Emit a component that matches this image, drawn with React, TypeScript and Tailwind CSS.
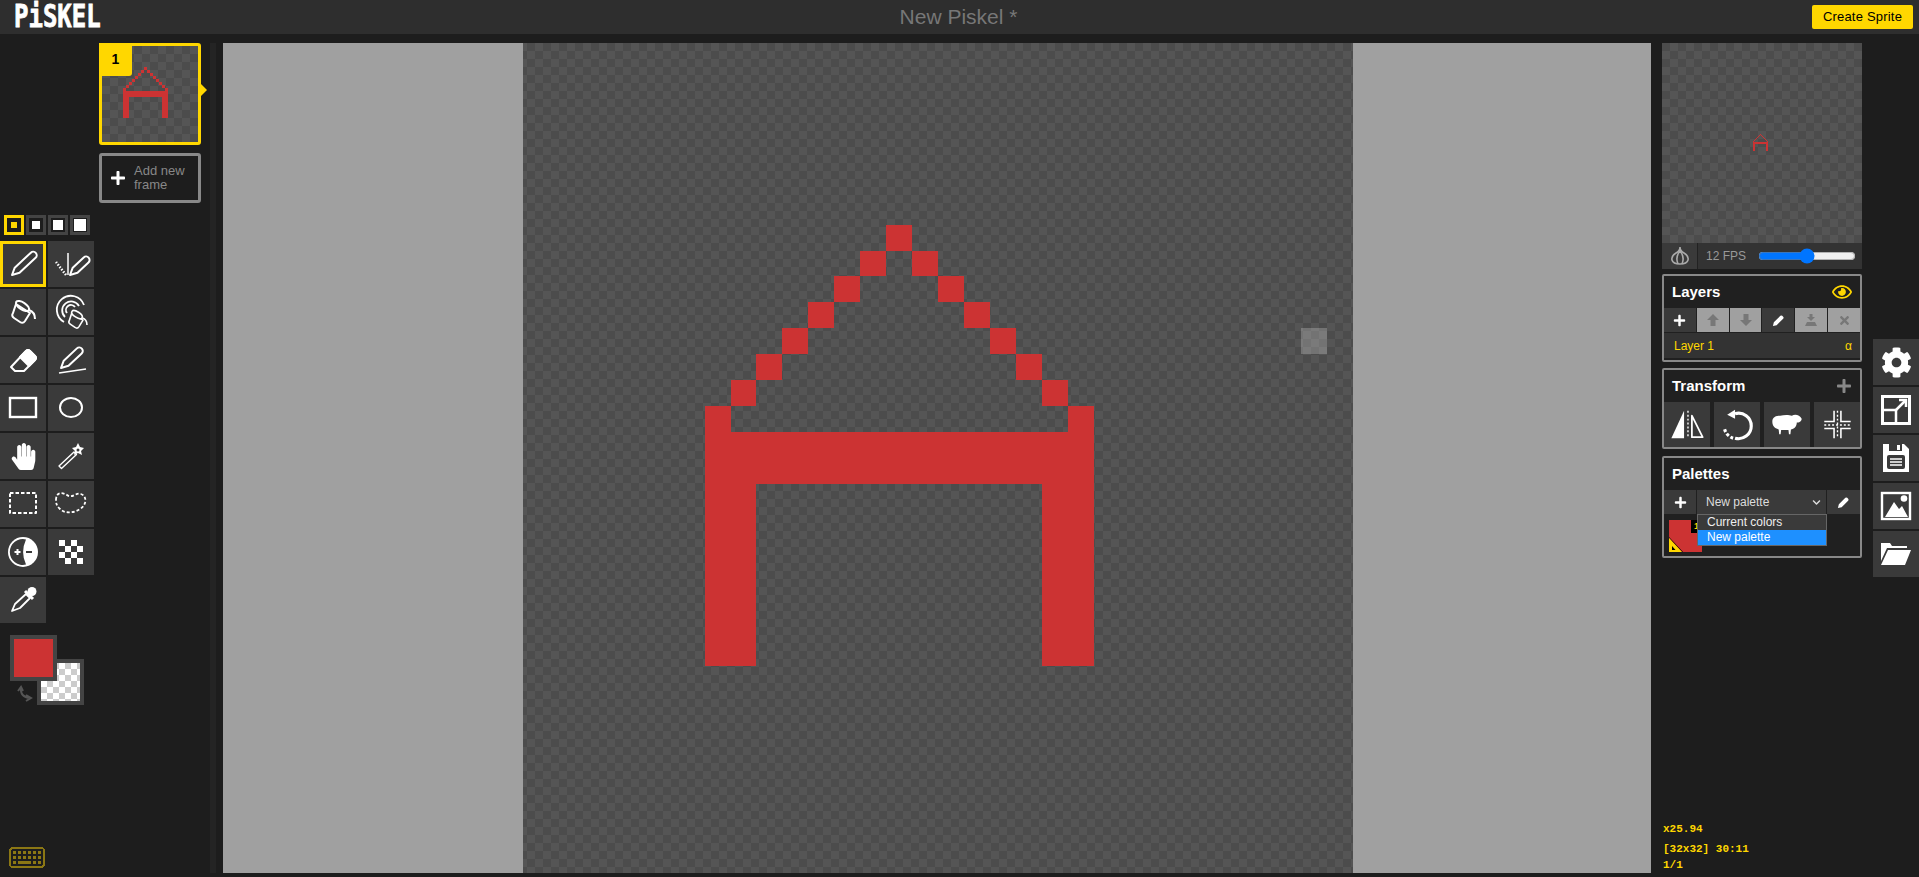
import type { ReactNode } from "react";
import { FaChevronDown, FaCog, FaHandPaper, FaPlus, FaRegEye, FaTimes } from "react-icons/fa";

const CHECKER =
  "bg-[conic-gradient(#555555_25%,#4c4c4c_0_50%,#555555_0_75%,#4c4c4c_0)] bg-[length:16px_16px]";

// sprite pixels as [col, row, w, h] on the 32x32 grid
const PIXELS = [
  [14, 7, 1, 1],
  [13, 8, 1, 1],
  [15, 8, 1, 1],
  [12, 9, 1, 1],
  [16, 9, 1, 1],
  [11, 10, 1, 1],
  [17, 10, 1, 1],
  [10, 11, 1, 1],
  [18, 11, 1, 1],
  [9, 12, 1, 1],
  [19, 12, 1, 1],
  [8, 13, 1, 1],
  [20, 13, 1, 1],
  [7, 14, 1, 1],
  [21, 14, 1, 1],
  [7, 15, 15, 2],
  [7, 17, 2, 7],
  [20, 17, 2, 7],
];

function Sprite({ className, hover }: { className: string; hover?: boolean }) {
  return (
    <svg viewBox="0 0 32 32" shapeRendering="crispEdges" className={className}>
      {PIXELS.map(([x, y, w, h]) => (
        <rect key={`${x}-${y}`} x={x} y={y} width={w} height={h} fill="#cc3333" />
      ))}
      {hover && <rect x={30} y={11} width={1} height={1} fill="#fff" fillOpacity={0.22} />}
    </svg>
  );
}

function Ico({ children }: { children: ReactNode }) {
  return (
    <svg
      viewBox="0 0 46 46"
      fill="none"
      stroke="#fff"
      strokeWidth={2}
      strokeLinejoin="round"
      className="h-full w-full"
    >
      {children}
    </svg>
  );
}

function Tile({
  children,
  selected,
  className = "h-[46px] w-[46px]",
}: {
  children: ReactNode;
  selected?: boolean;
  className?: string;
}) {
  return (
    <div
      className={`flex items-center justify-center bg-[#3a3a3a] ${className} ${
        selected ? "outline-[3px] -outline-offset-[3px] outline-solid outline-[#ffd700]" : ""
      }`}
    >
      {children}
    </div>
  );
}

const PencilShape = ({ x, y, len, angle = -43 }: { x: number; y: number; len: number; angle?: number }) => (
  <g transform={`translate(${x} ${y}) rotate(${angle})`}>
    <path d={`M0 0 L7 -3.5 H${len - 3} a3.5 3.5 0 0 1 0 7 H7 Z`} />
  </g>
);

const Bucket = ({ t = "" }: { t?: string }) => (
  <g transform={t}>
    <path d="M16 15 L30 24 L25 32 Q23 35 20 33 L14 29 Q11 27 13 24 Z" />
    <ellipse cx="22.5" cy="17" rx="7.5" ry="3.5" transform="rotate(33 22.5 17)" />
    <path d="M29 21 Q35 23 35 30" fill="none" />
  </g>
);

const SmallPencil = () => (
  <svg viewBox="0 0 14 14" fill="#fff" className="h-[13px] w-[13px]">
    <path d="M1 13 L2 9 L9 2 Q10 1 11 2 L12 3 Q13 4 12 5 L5 12 Z" />
  </svg>
);

const TOOLS: ReactNode[] = [
  <Ico key="pen">
    <PencilShape x={12} y={34} len={32} />
  </Ico>,
  <Ico key="mirror">
    <path d="M20 12 V34" strokeWidth={1.5} />
    <PencilShape x={22} y={34} len={25} />
    <path d="M18 34 L8 21" strokeWidth={2.5} strokeDasharray="1.5 1.5" />
  </Ico>,
  <Ico key="bucket">
    <Bucket />
  </Ico>,
  <Ico key="multibucket">
    <path d="M36 16 A14 14 0 1 0 16 33" strokeWidth={1.8} />
    <path d="M31 17 A9 9 0 1 0 17 28" strokeWidth={1.8} />
    <path d="M27 18 A5 5 0 1 0 19 24" strokeWidth={1.8} />
    <g fill="#3a3a3a">
      <Bucket t="translate(11 12) scale(.8)" />
    </g>
  </Ico>,
  <Ico key="eraser">
    <path d="M11 30 L26 14 Q28 12 30 14 L35 19 Q37 21 35 23 L24 34 H15 Z" />
    <path d="M20 20 L26 14 Q28 12 30 14 L35 19 Q37 21 35 23 L29 29 Z" fill="#fff" />
  </Ico>,
  <Ico key="stroke">
    <PencilShape x={13} y={31} len={28} />
    <path d="M11 36 L38 32" strokeWidth={1.6} />
  </Ico>,
  <Ico key="rect">
    <rect x="10" y="13" width="26" height="19" strokeWidth={2.4} strokeLinejoin="miter" />
  </Ico>,
  <Ico key="circle">
    <ellipse cx="23" cy="22.5" rx="11" ry="9.5" strokeWidth={2} />
  </Ico>,
  <div key="hand" className="text-[27px] text-white">
    <FaHandPaper />
  </div>,
  <Ico key="wand">
    <path d="M11 33 L26 19 L28.5 21.5 L13.5 35.5 Z" strokeWidth={1.4} />
    <g transform="translate(-3 1)">
      <path
        d="M33 9 L35 13 L39 14 L36 17 L37 21 L33 19 L29 21 L30 17 L27 14 L31 13 Z"
        fill="#fff"
        stroke="none"
      />
      <circle cx="33" cy="16" r="1.5" fill="#3a3a3a" stroke="none" />
    </g>
  </Ico>,
  <Ico key="select-rect">
    <rect x="10" y="12" width="26" height="20" strokeWidth={2} strokeDasharray="3.5 2" />
  </Ico>,
  <Ico key="lasso">
    <path
      d="M8 19 C8 11 14 11 19 14 C24 18 28 11 33 13 C39 15 39 24 32 28 C26 32 17 33 12 28 C9 25 8 23 8 19 Z"
      strokeWidth={1.8}
      strokeDasharray="3 2"
    />
  </Ico>,
  <svg key="lighten" viewBox="0 0 46 46" className="h-full w-full">
    <circle cx="23" cy="23" r="15" fill="#fff" />
    <path d="M26 10.4 A13 13 0 1 0 26 35.6 A30 30 0 0 1 26 10.4 Z" fill="#3a3a3a" />
    <path d="M14.5 23 H20.5 M17.5 20 V26" stroke="#fff" strokeWidth={2} />
    <rect x="26" y="22" width="6" height="2" fill="#3a3a3a" />
  </svg>,
  <div key="dither" className="grid grid-cols-4">
    {Array.from({ length: 16 }).map((_, i) => (
      <span
        key={i}
        className={`h-1.5 w-1.5 ${(Math.floor(i / 4) + i) % 2 === 0 ? "bg-white" : "bg-transparent"}`}
      />
    ))}
  </div>,
  <Ico key="dropper">
    <path d="M12 34 L15 27 L26 17 L30 21 L20 31 Z" strokeWidth={1.8} />
    <circle cx="32" cy="14.5" r="4.5" fill="#fff" stroke="none" />
    <path d="M25 14 L33 22" strokeWidth={3} />
  </Ico>,
];

const SIDEBAR: ReactNode[] = [
  <div key="settings" className="text-[31px] text-white">
    <FaCog />
  </div>,
  <Ico key="resize">
    <rect x="9.5" y="9.5" width="27" height="27" strokeWidth={3} strokeLinejoin="miter" />
    <path d="M9 23 H23 V37" strokeWidth={2.5} />
    <path d="M23 23 L32 14" strokeWidth={2.5} />
    <path d="M26 13 H33 V20" strokeWidth={2.5} strokeLinejoin="miter" />
  </Ico>,
  <svg key="save" viewBox="0 0 46 46" className="h-full w-full">
    <path d="M10 9 H31 L36 14 V37 H10 Z" fill="#fff" />
    <rect x="16" y="9" width="13" height="7" fill="#3a3a3a" />
    <rect x="24" y="10" width="3" height="5" fill="#fff" />
    <rect x="14" y="20" width="18" height="14" rx="2" fill="#3a3a3a" />
    <path d="M17 24 H29 M17 27 H29 M17 30 H29" stroke="#fff" strokeWidth={1.4} />
  </svg>,
  <Ico key="image">
    <rect x="9" y="10" width="28" height="26" strokeWidth={2.4} strokeLinejoin="miter" />
    <path d="M12 34 L21 19 L26 26 L29 23 L35 34 Z" fill="#fff" stroke="none" />
    <circle cx="31" cy="15.5" r="3.3" fill="#fff" stroke="none" />
  </Ico>,
  <svg key="open" viewBox="0 0 46 46" className="h-full w-full">
    <path d="M8 12 H17 L19 15 H34 V17 H14 L8 30 Z" fill="#fff" />
    <path d="M15 19 H38 L32 34 H8 Z" fill="#fff" />
  </svg>,
];

function Panel({ title, action, children, className }: { title: string; action?: ReactNode; children: ReactNode; className: string }) {
  return (
    <section className={`rounded-[2px] border-2 border-[#888888] bg-[#202020] ${className}`}>
      <div className="flex h-8 items-center justify-between px-2 text-[15px] font-bold text-white">
        <span>{title}</span>
        {action}
      </div>
      {children}
    </section>
  );
}

export default function App() {
  return (
    <div className="flex h-[877px] w-[1919px] flex-col overflow-hidden bg-[#1d1d1d] font-['Liberation_Sans',Arial,sans-serif]">
      {/* header */}
      <header className="flex h-[34px] shrink-0 items-center bg-[#2e2e2e] pl-[14px] pr-[6px]">
        <span className="w-[86px] origin-left scale-y-[1.3] font-['DejaVu_Sans_Mono',monospace] text-[24px] font-bold leading-none text-white [-webkit-text-stroke:0.6px_white]">
          PiSKEL
        </span>
        <div className="flex-1 pl-[5px] text-center text-[21px] text-[#777777]">New Piskel *</div>
        <button className="h-6 w-[101px] rounded-[2px] bg-[#ffd700] text-[13px] tracking-[0.2px] text-black">
          Create Sprite
        </button>
      </header>

      <div className="flex min-h-0 flex-1">
        {/* tools */}
        <aside className="flex w-[94px] shrink-0 flex-col">
          <div className="ml-1 mt-[181px] flex gap-0.5">
            {["h-1.5 w-1.5", "h-2 w-2", "h-2.5 w-2.5", "h-3 w-3"].map((s, i) => (
              <div
                key={s}
                className={`flex h-5 w-5 items-center justify-center border-[3px] bg-[#1d1d1d] ${
                  i === 0 ? "border-[#ffd700]" : "border-[#444444]"
                }`}
              >
                <span className={`${s} ${i === 0 ? "bg-[#ffd700]" : "bg-white"}`} />
              </div>
            ))}
          </div>
          <div className="mt-1.5 grid grid-cols-[46px_46px] gap-0.5">
            {TOOLS.map((t, i) => (
              <Tile key={i} selected={i === 0}>
                {t}
              </Tile>
            ))}
          </div>
          <div className="relative ml-2.5 mt-3 h-[70px] w-[74px]">
            <div className="absolute right-0 top-6 h-[46px] w-[47px] border-4 border-[#444444] bg-white">
              <div className="h-full w-full bg-[conic-gradient(#ffffff_25%,#cccccc_0_50%,#ffffff_0_75%,#cccccc_0)] bg-[length:12px_12px]" />
            </div>
            <div className="absolute left-0 top-0 h-[46px] w-[47px] border-4 border-[#444444] bg-[#cc3333]" />
            <svg
              viewBox="0 0 18 18"
              fill="none"
              stroke="#555555"
              strokeWidth={2}
              className="absolute left-[5px] top-[50px] h-[18px] w-[18px]"
            >
              <path d="M3 6 L6 2 L8 6 M6 3 Q5 12 15 13 M11 10 L16 13 L11 16" />
            </svg>
          </div>
          <svg
            viewBox="0 0 36 21"
            className="mb-[9px] ml-[9px] mt-auto h-[21px] w-9"
            fill="#8b7714"
            shapeRendering="crispEdges"
          >
            <rect x="1" y="1" width="34" height="19" rx="3" fill="none" stroke="#8b7714" strokeWidth={2} />
            {Array.from({ length: 18 }).map((_, i) =>
              i === 13 || i === 14 || i === 15 ? null : (
                <rect key={i} x={4 + (i % 6) * 5} y={4 + Math.floor(i / 6) * 5} width={3} height={3} />
              ),
            )}
            <rect x="9" y="14" width="13" height="3" />
            <rect x="24" y="14" width="3" height="3" />
          </svg>
        </aside>

        {/* frames */}
        <div className="ml-[5px] mt-[9px] w-[102px] shrink-0">
          <div className="relative h-[102px] rounded-[3px] border-[3px] border-[#ffd700]">
            <div className={`h-full w-full ${CHECKER}`}>
              <Sprite className="h-24 w-24" />
            </div>
            <div className="absolute -left-[3px] -top-[3px] flex h-[33px] w-[33px] items-center justify-center rounded-br-[3px] bg-[#ffd700] text-[14px] font-bold text-black">
              1
            </div>
            <div className="absolute -right-[9px] top-[38px] h-0 w-0 border-y-[6px] border-l-[6px] border-y-transparent border-l-[#ffd700]" />
          </div>
          <div className="mt-2 flex h-[50px] items-center rounded-[3px] border-[3px] border-[#888888] pl-[8px]">
            <FaPlus className="text-[16px] text-white" />
            <span className="ml-2 text-[13px] leading-[14px] text-[#888888]">
              Add new
              <br />
              frame
            </span>
          </div>
        </div>

        <div className="mb-1 ml-[9px] mt-[9px] w-1.5 shrink-0 bg-[#242424]" />

        {/* drawing area */}
        <main className="mb-1 ml-[7px] mt-[9px] flex w-[1428px] shrink-0 justify-center bg-[#a0a0a0] pl-[1px]">
          <div className={`h-[830px] w-[830px] bg-[position:4px_0] ${CHECKER}`}>
            <Sprite className="h-full w-full" hover />
          </div>
        </main>

        {/* right panels */}
        <aside className="ml-[11px] mt-[9px] flex w-[200px] shrink-0 flex-col">
          <div className={`flex h-[200px] items-center justify-center ${CHECKER}`}>
            <Sprite className="h-8 w-8" />
          </div>
          <div className="flex h-[26px] items-center bg-[#333333]">
            <div className="flex h-full w-9 items-center justify-center border-r border-[#222222] bg-[#3a3a3a]">
              <svg viewBox="0 0 20 20" fill="none" stroke="#aaaaaa" strokeWidth={1.6} className="h-5 w-5">
                <path d="M10 1 Q10 5 6 7 Q1 10 2 14 Q3 18 10 18 Q17 18 18 14 Q19 10 14 7 Q10 5 10 1 Z" />
                <path d="M10 5 Q5 11 8 18 M10 5 Q15 11 12 18" />
              </svg>
            </div>
            <span className="ml-2 w-[52px] text-[12px] text-[#999999]">12 FPS</span>
            <input type="range" min={0} max={24} defaultValue={12} className="h-4 w-[98px]" />
          </div>

          <Panel
            title="Layers"
            className="mt-[5px] h-[88px]"
            action={<FaRegEye className="text-[20px] text-[#ffd700]" />}
          >
            <div className="flex h-6 gap-px">
              <div className="flex flex-1 items-center justify-center bg-[#3a3a3a] text-[13px] text-white">
                <FaPlus />
              </div>
              <div className="flex flex-1 items-center justify-center bg-[#a0a0a0]">
                <svg viewBox="0 0 12 12" fill="#777777" className="h-3 w-3">
                  <path d="M6 0 L12 6 H8.5 V12 H3.5 V6 H0 Z" />
                </svg>
              </div>
              <div className="flex flex-1 items-center justify-center bg-[#a0a0a0]">
                <svg viewBox="0 0 12 12" fill="#777777" className="h-3 w-3">
                  <path d="M6 12 L12 6 H8.5 V0 H3.5 V6 H0 Z" />
                </svg>
              </div>
              <div className="flex flex-1 items-center justify-center bg-[#3a3a3a]">
                <SmallPencil />
              </div>
              <div className="flex flex-1 items-center justify-center bg-[#a0a0a0]">
                <svg viewBox="0 0 14 14" fill="#777777" className="h-3.5 w-3.5">
                  <path d="M5.5 1 H8.5 V4 H11 L7 8 L3 4 H5.5 Z M3 9 H11 L13 13 H1 Z" />
                </svg>
              </div>
              <div className="flex flex-1 items-center justify-center bg-[#a0a0a0] text-[13px] text-[#777777]">
                <FaTimes />
              </div>
            </div>
            <div className="mt-px flex h-[25px] items-center justify-between bg-[#333333] pl-2.5 pr-2 text-[12px] text-[#ffd700]">
              <span>Layer 1</span>
              <span>α</span>
            </div>
          </Panel>

          <Panel
            title="Transform"
            className="mt-1.5 h-[81px]"
            action={<FaPlus className="text-[16px] text-[#888888]" />}
          >
            <div className="flex justify-between">
              <Tile className="h-[45px] w-[46px]">
                <Ico>
                  <path d="M7 37 L20 9 V37 Z" fill="#fff" stroke="none" />
                  <path d="M24 9 V37" strokeDasharray="2 2" strokeWidth={1.4} />
                  <path d="M28 14 L39 36 H28 Z" strokeWidth={1.8} />
                </Ico>
              </Tile>
              <Tile className="h-[45px] w-[46px]">
                <Ico>
                  <path d="M21 12 A13 13 0 1 1 21 37" strokeWidth={3.2} />
                  <path d="M19 37 A13 13 0 0 1 10 26" strokeWidth={3.2} strokeDasharray="3 2" />
                  <path d="M21 8 V17 L13 13 Z" fill="#fff" stroke="none" />
                </Ico>
              </Tile>
              <Tile className="h-[45px] w-[46px]">
                <Ico>
                  <path
                    d="M8 20 C8 15 12 14 16 14 C20 13 25 13 28 14 C31 12 36 13 38 17 C38 20 35 21 33 21 C33 25 30 28 27 28 L26.5 33 H25 L24.5 28.5 H17 L16.5 33 H15 L14.5 28 C10 27 8 24 8 20 Z"
                    fill="#fff"
                    stroke="none"
                  />
                </Ico>
              </Tile>
              <Tile className="h-[45px] w-[46px]">
                <Ico>
                  <path d="M20 9 V20 H10 M27 9 V20 H37 M20 37 V27 H10 M27 37 V27 H37" strokeWidth={1.6} strokeLinejoin="miter" />
                  <path d="M23.5 9 V37 M10 23.5 H37" strokeWidth={1.4} strokeDasharray="2 2" />
                </Ico>
              </Tile>
            </div>
          </Panel>

          <Panel title="Palettes" className="mt-[7px] h-[102px]">
            <div className="relative">
              <div className="flex h-6 gap-px">
                <div className="flex w-8 items-center justify-center bg-[#3a3a3a] text-[13px] text-white">
                  <FaPlus />
                </div>
                <div className="flex flex-1 items-center justify-between bg-[#3a3a3a] pl-[9px] pr-[5px] text-[12px] text-[#dddddd]">
                  <span>New palette</span>
                  <FaChevronDown className="text-[9px]" />
                </div>
                <div className="flex w-[33px] items-center justify-center bg-[#3a3a3a]">
                  <SmallPencil />
                </div>
              </div>
              <div className="relative ml-[5px] mt-1.5 h-8 w-[33px] bg-[#cc3333]">
                <span className="absolute right-0 top-0 h-[13px] w-[11px] bg-black text-center text-[9px] font-bold leading-[13px] text-[#ffd700]">
                  1
                </span>
                <svg viewBox="0 0 14 15" className="absolute bottom-0 left-0 h-[15px] w-3.5">
                  <path d="M0 0 L14 15 H13 L0 1 Z" fill="#000" />
                  <path d="M0 1 L13 15 H0 Z" fill="#ffd700" />
                  <path d="M3 9 L6.5 13 H3 Z" fill="#000" />
                </svg>
              </div>
              <div className="absolute left-[33px] top-6 w-[130px] border border-[#666666] bg-[#3a3a3a] text-[12px] leading-[15px] text-[#eeeeee]">
                <div className="pl-[9px]">Current colors</div>
                <div className="bg-[#1e90ff] pl-[9px] text-white">New palette</div>
              </div>
            </div>
          </Panel>

          <div className="mb-1 mt-auto pl-px font-['Liberation_Mono',monospace] text-[11px] font-bold leading-4 text-[#ffd700]">
            <div className="mb-1">x25.94</div>
            <div>[32x32] 30:11</div>
            <div>1/1</div>
          </div>
        </aside>

        {/* settings */}
        <nav className="ml-[11px] mt-[305px] flex w-[46px] shrink-0 flex-col gap-0.5">
          {SIDEBAR.map((s, i) => (
            <Tile key={i}>{s}</Tile>
          ))}
        </nav>
      </div>
    </div>
  );
}
